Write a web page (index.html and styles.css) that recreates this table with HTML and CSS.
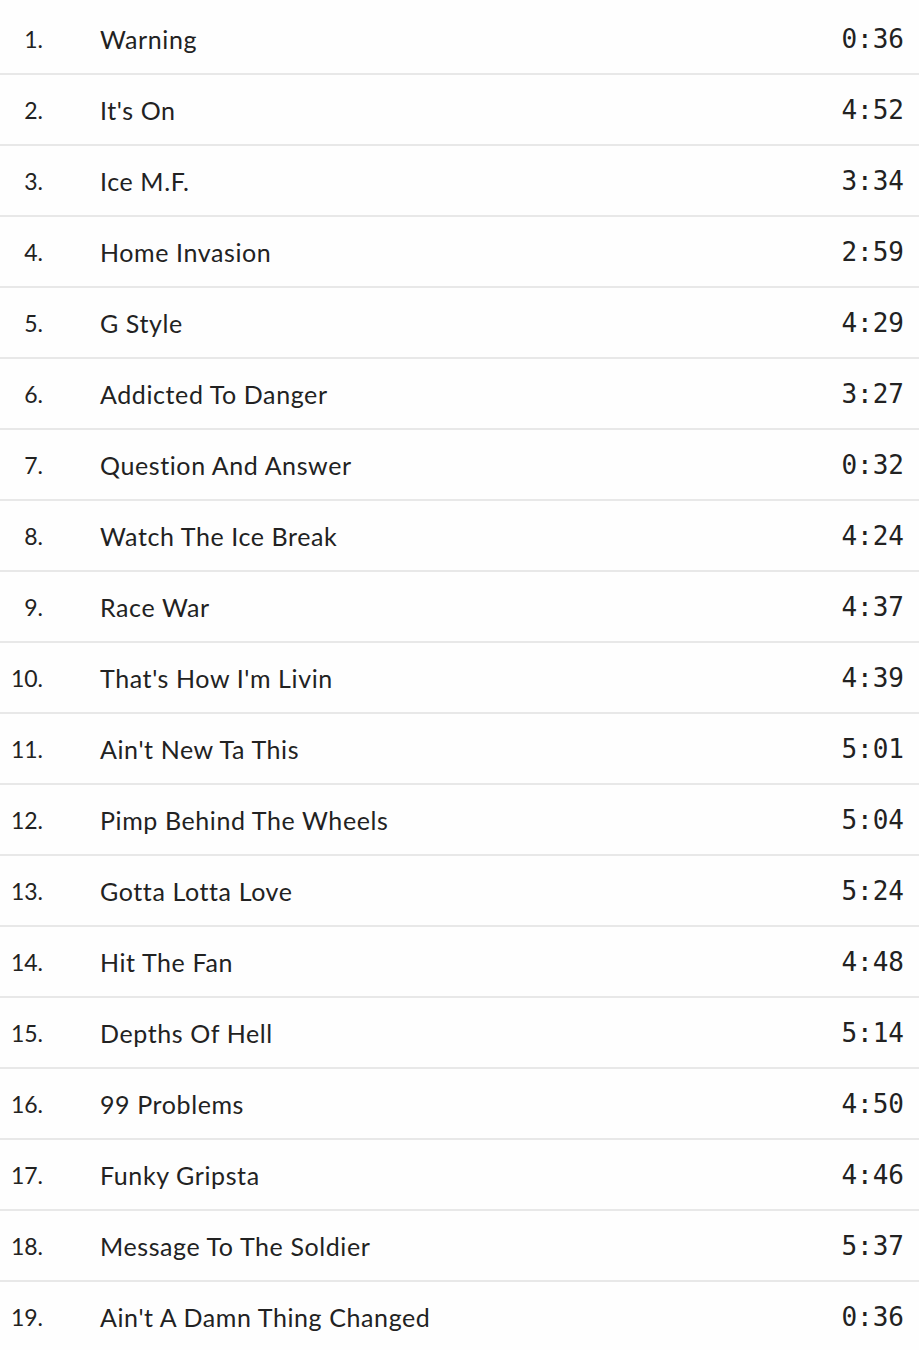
FILE: index.html
```html
<!DOCTYPE html>
<html lang="en">
<head>
  <meta charset="UTF-8">
  <meta name="viewport" content="width=device-width, initial-scale=1.0">
  <title>Tracklist</title>
  <link rel="stylesheet" href="styles.css">
</head>
<body>
  <ol class="tracklist">
    <li class="track"><span class="num">1.</span><span class="title">Warning</span><span class="time">0:36</span></li>
    <li class="track"><span class="num">2.</span><span class="title">It's On</span><span class="time">4:52</span></li>
    <li class="track"><span class="num">3.</span><span class="title">Ice M.F.</span><span class="time">3:34</span></li>
    <li class="track"><span class="num">4.</span><span class="title">Home Invasion</span><span class="time">2:59</span></li>
    <li class="track"><span class="num">5.</span><span class="title">G Style</span><span class="time">4:29</span></li>
    <li class="track"><span class="num">6.</span><span class="title">Addicted To Danger</span><span class="time">3:27</span></li>
    <li class="track"><span class="num">7.</span><span class="title">Question And Answer</span><span class="time">0:32</span></li>
    <li class="track"><span class="num">8.</span><span class="title">Watch The Ice Break</span><span class="time">4:24</span></li>
    <li class="track"><span class="num">9.</span><span class="title">Race War</span><span class="time">4:37</span></li>
    <li class="track"><span class="num">10.</span><span class="title">That's How I'm Livin</span><span class="time">4:39</span></li>
    <li class="track"><span class="num">11.</span><span class="title">Ain't New Ta This</span><span class="time">5:01</span></li>
    <li class="track"><span class="num">12.</span><span class="title">Pimp Behind The Wheels</span><span class="time">5:04</span></li>
    <li class="track"><span class="num">13.</span><span class="title">Gotta Lotta Love</span><span class="time">5:24</span></li>
    <li class="track"><span class="num">14.</span><span class="title">Hit The Fan</span><span class="time">4:48</span></li>
    <li class="track"><span class="num">15.</span><span class="title">Depths Of Hell</span><span class="time">5:14</span></li>
    <li class="track"><span class="num">16.</span><span class="title">99 Problems</span><span class="time">4:50</span></li>
    <li class="track"><span class="num">17.</span><span class="title">Funky Gripsta</span><span class="time">4:46</span></li>
    <li class="track"><span class="num">18.</span><span class="title">Message To The Soldier</span><span class="time">5:37</span></li>
    <li class="track"><span class="num">19.</span><span class="title">Ain't A Damn Thing Changed</span><span class="time">0:36</span></li>
  </ol>
</body>
</html>
```

FILE: styles.css
```css
body {
  margin: 0;
  padding-top: 4px;
  background-color: #fefefe;
  font-family: 'Lato', 'Noto Sans', sans-serif;
  color: #222;
}

.tracklist {
  list-style: none;
  margin: 0;
  padding: 0;
}

.track {
  display: flex;
  align-items: center;
  height: 69px;
  border-bottom: 2px solid #e8e8e8;
}

.track:last-child {
  border-bottom: none;
}

.num {
  width: 43px;
  text-align: right;
  font-size: 23px;
  flex-shrink: 0;
}

.title {
  flex: 1;
  margin-left: 57px;
  font-size: 25px;
  letter-spacing: 0.6px;
}

.time {
  margin-top: 1px;
  margin-right: 15px;
  font-family: 'DejaVu Sans Mono', monospace;
  font-size: 26px;
}
```
